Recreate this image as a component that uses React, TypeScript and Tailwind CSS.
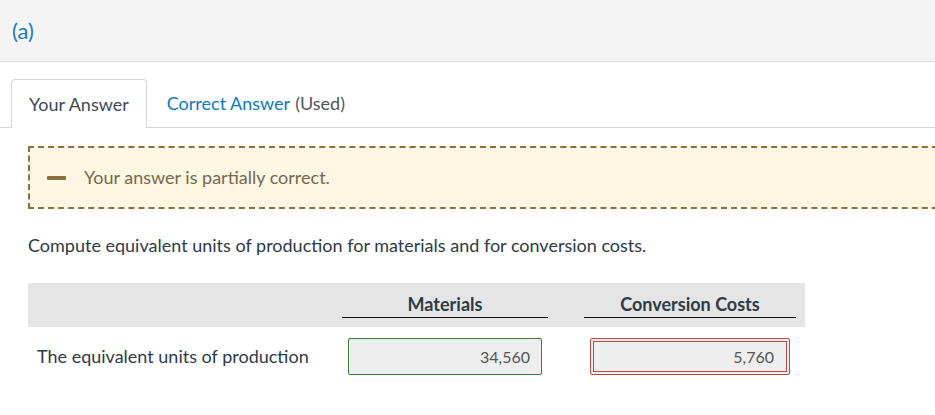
import React from 'react';

const App: React.FC = () => {
  return (
    <div className="w-[935px] h-[415px] overflow-hidden bg-white font-['Lato',sans-serif]">
      {/* Part header */}
      <div className="h-[62px] bg-[#f4f4f4] border-b border-[#dcdcdc] flex items-center pl-[12px]">
        <span className="text-[22px] text-[#1a7bb9]">(a)</span>
      </div>

      {/* Tabs */}
      <div className="mt-[17px] flex items-end border-b border-[#d8d8d8] pl-[11px]">
        <div className="-mb-px h-[49px] px-[17px] flex items-center bg-white border border-b-0 border-[#d8d8d8] rounded-t-[4px] text-[18px] text-[#3b4a54]">
          Your Answer
        </div>
        <div className="h-[48px] px-[20px] flex items-center text-[18px]">
          <span className="text-[#0b7bbd]">Correct Answer</span>
          <span className="ml-[5px] text-[#555555]">(Used)</span>
        </div>
      </div>

      <div className="pl-[28px]">
        {/* Feedback box */}
        <div className="mt-[18px] w-[940px] h-[63px] bg-[#fcf6e3] border-2 border-dashed border-[#8b6f3e] flex items-center">
          <div className="ml-[17px] w-[19px] h-[4px] bg-[#8b6f3e] rounded-[1px]" />
          <span className="ml-[18px] text-[18px] text-[#76684e]">Your answer is partially correct.</span>
        </div>

        {/* Question */}
        <p className="mt-[24px] text-[18px] text-[#2d3b45] leading-[24px]">
          Compute equivalent units of production for materials and for conversion costs.
        </p>

        {/* Table */}
        <div className="mt-[26px] w-[777px]">
          <div className="h-[44px] bg-[#e5e5e5] flex items-end pb-[9px]">
            <div className="w-[314px]" />
            <div className="w-[206px] border-b border-[#111] text-center font-bold text-[18px] text-[#2d3b45] leading-[24px] pb-[1px]">
              Materials
            </div>
            <div className="w-[36px]" />
            <div className="w-[212px] border-b border-[#111] text-center font-bold text-[18px] text-[#2d3b45] leading-[24px] pb-[1px]">
              Conversion Costs
            </div>
          </div>
          <div className="mt-[11px] flex items-center">
            <div className="w-[320px] pl-[9px] text-[18px] text-[#2d3b45]">The equivalent units of production</div>
            <div className="w-[194px] h-[37px] bg-[#eeeeee] border border-[#3c7f3c] rounded-[2px] flex items-center justify-end pr-[11px] text-[16px] text-[#555555]">
              34,560
            </div>
            <div className="w-[48px]" />
            <div className="w-[200px] h-[37px] bg-[#eeeeee] border border-[#b94a48] rounded-[2px] p-[2px]">
              <div className="w-full h-full border border-[#b94a48] flex items-center justify-end pr-[12px] text-[16px] text-[#555555]">
                5,760
              </div>
            </div>
          </div>
        </div>
      </div>
    </div>
  );
};

export default App;
